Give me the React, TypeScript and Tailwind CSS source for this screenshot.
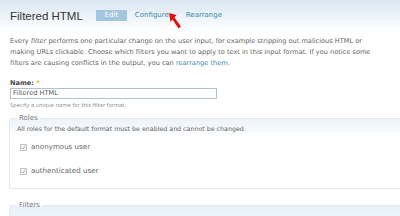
import React from 'react';

const verdana = { fontFamily: '"DejaVu Sans", Verdana, sans-serif' };

const RedArrow: React.FC = () => (
  <svg width="16" height="18" viewBox="0 0 16 18" className="absolute left-[167px] top-[12px]">
    <path d="M2 1 L9.5 3 L7.5 5.5 L14 14.5 L11.5 16.5 L5.5 7.5 L3.5 10 Z" fill="#e0140e" />
  </svg>
);

const Checkbox: React.FC = () => (
  <span className="inline-flex h-[7px] w-[7px] items-center justify-center border border-[#c4c4c4] bg-[#f4f4f4]">
    <svg width="5" height="5" viewBox="0 0 5 5">
      <path d="M0.6 2.6 L2 4 L4.4 0.8" fill="none" stroke="#a9a9a9" strokeWidth="0.9" />
    </svg>
  </span>
);

export default function App() {
  return (
    <div className="relative h-[216px] w-[400px] overflow-hidden bg-white text-[#636363]" style={verdana}>
      {/* Header with tabs */}
      <div className="flex h-[31px] items-start bg-gradient-to-b from-[#d9e6f1] to-white px-[10px] pt-[9px]">
        <h1 className="text-[11.5px] leading-[14px] text-[#333]" style={{ fontFamily: '"Liberation Sans", Arial, sans-serif' }}>
          Filtered HTML
        </h1>
        <div className="ml-[13px] flex items-center text-[7px]">
          <span className="mt-[1px] flex h-[11px] w-[31px] items-center justify-center bg-[#a3c6e0] text-white">Edit</span>
          <span className="ml-[8px] text-[#3d87b3]">Configure</span>
          <span className="ml-[17px] text-[#3d87b3]">Rearrange</span>
        </div>
      </div>
      <RedArrow />

      {/* Intro */}
      <p className="px-[10px] pt-[5px] text-[6.6px] leading-[11px] whitespace-nowrap">
        Every <em>filter</em> performs one particular change on the user input, for example stripping out malicious HTML or
        <br />
        making URLs clickable. Choose which filters you want to apply to text in this input format. If you notice some
        <br />
        filters are causing conflicts in the output, you can <span className="text-[#3d87b3]">rearrange them</span>.
      </p>

      {/* Name */}
      <div className="px-[10px] pt-[10px]">
        <div className="text-[6.6px] font-bold leading-[9px] text-[#444]">
          Name: <span className="text-[#f0b020]">*</span>
        </div>
        <div className="flex h-[11px] w-[207px] items-center border border-[#b4c1cc] px-[2px] text-[6.6px] text-[#555]">
          Filtered HTML
        </div>
        <div className="mt-[2px] text-[5.3px] leading-[8px] text-[#909090]">Specify a unique name for this filter format.</div>
      </div>

      {/* Roles fieldset */}
      <fieldset className="ml-[9px] mt-[5px] w-[420px] border border-[#e4eaf0] bg-gradient-to-b from-[#edf3f9] to-white to-[18px] px-[7px] pb-[12px]">
        <legend className="px-[2px] text-[7px] leading-[9px] text-[#777]">Roles</legend>
        <p className="pt-[1px] text-[6.3px] leading-[10px]">All roles for the default format must be enabled and cannot be changed.</p>
        <div className="mt-[8px] flex items-center gap-[4px] pl-[3px] text-[7.1px] leading-[10px] text-[#666]">
          <Checkbox /> anonymous user
        </div>
        <div className="mt-[14px] flex items-center gap-[4px] pl-[3px] text-[7.1px] leading-[10px] text-[#666]">
          <Checkbox /> authenticated user
        </div>
      </fieldset>

      {/* Filters fieldset */}
      <fieldset className="ml-[9px] mt-[12px] h-[40px] w-[420px] border border-[#e4eaf0] bg-gradient-to-b from-[#e8f1fa] to-[#f3f8fc] px-[7px]">
        <legend className="px-[2px] text-[7px] leading-[9px] text-[#777]">Filters</legend>
      </fieldset>
    </div>
  );
}
